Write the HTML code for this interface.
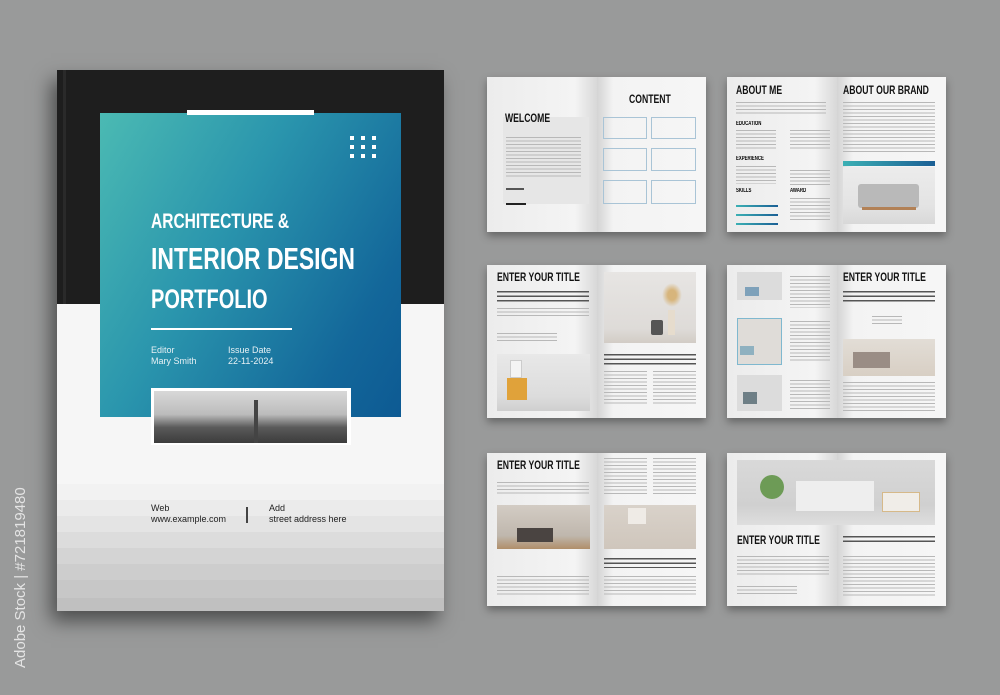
<!DOCTYPE html>
<html><head><meta charset="utf-8"><style>
*{margin:0;padding:0;box-sizing:border-box}
body{width:1000px;height:695px;background:#999a9a;position:relative;overflow:hidden;font-family:"Liberation Sans",sans-serif}
.a{position:absolute}
.cond{font-weight:bold;transform:scaleX(0.72);transform-origin:0 0;white-space:nowrap}
.sp{position:absolute;background:#f2f2f2;box-shadow:0 4px 8px rgba(0,0,0,.35)}
.pg{position:absolute;top:0;bottom:0;width:50%}
.pl{left:0;background:linear-gradient(90deg,#ececec,#f4f4f4 80%,#d8d8d8)}
.pr{right:0;background:linear-gradient(90deg,#d4d4d4,#f3f3f3 15%,#f6f6f6)}
.tx{position:absolute;background:repeating-linear-gradient(#b8b8b8 0 1px,transparent 1px 3.5px)}
.tb{position:absolute;background:repeating-linear-gradient(#555 0 1.5px,transparent 1.5px 4.5px)}
.h{position:absolute;color:#111;font-size:12px;white-space:nowrap}
</style></head><body>

<!-- cover -->
<div class="a" style="left:57px;top:70px;width:387px;height:541px;box-shadow:-6px 10px 18px rgba(0,0,0,.5);background:#fff"></div>
<div class="a" style="left:57px;top:70px;width:387px;height:234px;background:#1e1e1e"></div>
<div class="a" style="left:63px;top:70px;width:3px;height:234px;background:#2a2a2a"></div>
<div class="a" style="left:57px;top:304px;width:387px;height:180px;background:#f6f6f6"></div>
<div class="a" style="left:57px;top:484px;width:387px;height:16px;background:#f2f2f2"></div>
<div class="a" style="left:57px;top:500px;width:387px;height:16px;background:#ebebeb"></div>
<div class="a" style="left:57px;top:516px;width:387px;height:16px;background:#e4e4e4"></div>
<div class="a" style="left:57px;top:532px;width:387px;height:16px;background:#dcdcdc"></div>
<div class="a" style="left:57px;top:548px;width:387px;height:16px;background:#d4d4d4"></div>
<div class="a" style="left:57px;top:564px;width:387px;height:16px;background:#cdcdcd"></div>
<div class="a" style="left:57px;top:580px;width:387px;height:18px;background:#c7c7c7"></div>
<div class="a" style="left:57px;top:598px;width:387px;height:13px;background:#c0c0c0"></div>
<div class="a" style="left:100px;top:113px;width:301px;height:304px;background:linear-gradient(120deg,#4bbab3 0%,#2a95ad 40%,#13679a 80%,#0d5a93 100%)"></div>
<div class="a" style="left:187px;top:110px;width:127px;height:5px;background:#fff"></div>
<svg class="a" style="left:348px;top:134px" width="30" height="26"><g fill="#fff">
<rect x="2" y="2" width="4" height="4"/><rect x="13" y="2" width="4" height="4"/><rect x="24" y="2" width="4" height="4"/>
<rect x="2" y="11" width="4" height="4"/><rect x="13" y="11" width="4" height="4"/><rect x="24" y="11" width="4" height="4"/>
<rect x="2" y="20" width="4" height="4"/><rect x="13" y="20" width="4" height="4"/><rect x="24" y="20" width="4" height="4"/></g></svg>
<div class="a cond" style="left:151px;top:209px;color:#fff;font-size:21px;line-height:26px;transform:scaleX(0.74)">ARCHITECTURE &amp;</div>
<div class="a cond" style="left:151px;top:242px;color:#fff;font-size:31px;line-height:34px;transform:scaleX(0.74)">INTERIOR DESIGN</div>
<div class="a cond" style="left:151px;top:283px;color:#fff;font-size:27px;line-height:32px;transform:scaleX(0.74)">PORTFOLIO</div>
<div class="a" style="left:151px;top:328px;width:141px;height:2px;background:#fff"></div>
<div class="a" style="left:151px;top:345px;color:#e6f0f4;font-size:9px;line-height:11px">Editor<br>Mary Smith</div>
<div class="a" style="left:228px;top:345px;color:#e6f0f4;font-size:9px;line-height:11px">Issue Date<br>22-11-2024</div>
<div class="a" style="left:151px;top:388px;width:200px;height:57px;background:#fff"></div>
<div class="a" style="left:154px;top:391px;width:193px;height:52px;background:linear-gradient(#d8d8d8,#bcbcbc 45%,#5a5a5a 70%,#3c3c3c)"></div>
<div class="a" style="left:254px;top:400px;width:4px;height:43px;background:#444"></div>
<div class="a" style="left:151px;top:503px;color:#222;font-size:9px;line-height:11px">Web<br>www.example.com</div>
<div class="a" style="left:246px;top:507px;width:1.5px;height:16px;background:#444"></div>
<div class="a" style="left:269px;top:503px;color:#222;font-size:9px;line-height:11px">Add<br>street address here</div>

<!-- watermark id -->
<div class="a" style="left:12px;top:668px;transform:rotate(-90deg);transform-origin:0 0;color:#e4e4e4;font-size:15px;white-space:nowrap">Adobe Stock | #721819480</div>

<!-- S1 -->
<div class="sp" style="left:487px;top:77px;width:219px;height:155px"><div class="pg pl"></div><div class="pg pr"></div></div>
<div class="a" style="left:503px;top:117px;width:86px;height:87px;background:#e6e6e6"></div>
<div class="h cond" style="left:505px;top:111px">WELCOME</div>
<div class="tx" style="left:506px;top:137px;width:75px;height:40px"></div>
<div class="a" style="left:506px;top:188px;width:18px;height:2px;background:#555"></div>
<div class="a" style="left:506px;top:203px;width:20px;height:2px;background:#222"></div>
<div class="h cond" style="left:629px;top:92px">CONTENT</div>
<div class="a" style="left:603px;top:117px;width:44px;height:22px;border:1px solid #a9c4d6"></div>
<div class="a" style="left:651px;top:117px;width:45px;height:22px;border:1px solid #a9c4d6"></div>
<div class="a" style="left:603px;top:148px;width:44px;height:23px;border:1px solid #a9c4d6"></div>
<div class="a" style="left:651px;top:148px;width:45px;height:23px;border:1px solid #a9c4d6"></div>
<div class="a" style="left:603px;top:180px;width:44px;height:24px;border:1px solid #a9c4d6"></div>
<div class="a" style="left:651px;top:180px;width:45px;height:24px;border:1px solid #a9c4d6"></div>

<!-- S2 -->
<div class="sp" style="left:727px;top:77px;width:219px;height:155px"><div class="pg pl"></div><div class="pg pr"></div></div>
<div class="h cond" style="left:736px;top:83px">ABOUT ME</div>
<div class="tx" style="left:736px;top:102px;width:90px;height:12px"></div>
<div class="a cond" style="left:736px;top:121px;font-size:6px">EDUCATION</div>
<div class="tx" style="left:736px;top:130px;width:40px;height:20px"></div>
<div class="tx" style="left:790px;top:130px;width:40px;height:20px"></div>
<div class="a cond" style="left:736px;top:156px;font-size:6px">EXPERIENCE</div>
<div class="tx" style="left:736px;top:166px;width:40px;height:18px"></div>
<div class="tx" style="left:790px;top:170px;width:40px;height:16px"></div>
<div class="a cond" style="left:736px;top:188px;font-size:6px">SKILLS</div>
<div class="a cond" style="left:790px;top:188px;font-size:6px">AWARD</div>
<div class="a" style="left:736px;top:205px;width:42px;height:2px;background:linear-gradient(90deg,#3bb0b4,#1b5f95)"></div>
<div class="a" style="left:736px;top:214px;width:42px;height:2px;background:linear-gradient(90deg,#3bb0b4,#1b5f95)"></div>
<div class="a" style="left:736px;top:223px;width:42px;height:2px;background:linear-gradient(90deg,#3bb0b4,#1b5f95)"></div>
<div class="tx" style="left:790px;top:198px;width:40px;height:24px"></div>
<div class="h cond" style="left:843px;top:83px">ABOUT OUR BRAND</div>
<div class="tx" style="left:843px;top:102px;width:92px;height:50px"></div>
<div class="a" style="left:843px;top:161px;width:92px;height:5px;background:linear-gradient(90deg,#3bb0b4,#1b5f95)"></div>
<div class="a" style="left:843px;top:167px;width:92px;height:57px;background:linear-gradient(#ececec,#e3e3e3 70%,#d8d8d8)"></div>
<div class="a" style="left:858px;top:184px;width:61px;height:24px;background:#b9b9b9;border-radius:3px"></div>
<div class="a" style="left:862px;top:207px;width:54px;height:3px;background:#b28156"></div>

<!-- S3 -->
<div class="sp" style="left:487px;top:265px;width:219px;height:153px"><div class="pg pl"></div><div class="pg pr"></div></div>
<div class="h cond" style="left:497px;top:270px">ENTER YOUR TITLE</div>
<div class="tb" style="left:497px;top:291px;width:92px;height:13px"></div>
<div class="tx" style="left:497px;top:308px;width:92px;height:10px"></div>
<div class="tx" style="left:497px;top:333px;width:60px;height:10px"></div>
<div class="a" style="left:497px;top:354px;width:93px;height:57px;background:linear-gradient(#e8e8e8,#dcdcdc 75%,#cfcfcf)"></div>
<div class="a" style="left:507px;top:378px;width:20px;height:22px;background:#e0a23a"></div>
<div class="a" style="left:510px;top:360px;width:12px;height:18px;background:#f4f4f4;border:1px solid #ccc"></div>
<div class="a" style="left:604px;top:272px;width:92px;height:71px;background:linear-gradient(#e7e5e3,#dedbd8 80%,#d2ccc5)"></div>
<div class="a" style="left:651px;top:320px;width:12px;height:15px;background:#555;border-radius:2px"></div>
<div class="a" style="left:668px;top:310px;width:7px;height:25px;background:#e6dccd"></div>
<div class="a" style="left:662px;top:283px;width:20px;height:24px;background:radial-gradient(#d7b57c 30%,transparent 70%)"></div>
<div class="tb" style="left:604px;top:354px;width:92px;height:13px"></div>
<div class="tx" style="left:604px;top:371px;width:43px;height:35px"></div>
<div class="tx" style="left:653px;top:371px;width:43px;height:35px"></div>

<!-- S4 -->
<div class="sp" style="left:727px;top:265px;width:219px;height:153px"><div class="pg pl"></div><div class="pg pr"></div></div>
<div class="a" style="left:737px;top:272px;width:45px;height:28px;background:#dcdcdc"></div>
<div class="a" style="left:745px;top:287px;width:14px;height:9px;background:#7ea1ba"></div>
<div class="a" style="left:737px;top:318px;width:45px;height:47px;background:#dfdcd8;border:1px solid #7fb8cf"></div>
<div class="a" style="left:740px;top:346px;width:14px;height:9px;background:#8fb1c0"></div>
<div class="a" style="left:737px;top:375px;width:45px;height:36px;background:#dcdcdc"></div>
<div class="a" style="left:743px;top:392px;width:14px;height:12px;background:#6e7f86"></div>
<div class="tx" style="left:790px;top:276px;width:40px;height:32px"></div>
<div class="tx" style="left:790px;top:321px;width:40px;height:40px"></div>
<div class="tx" style="left:790px;top:380px;width:40px;height:30px"></div>
<div class="h cond" style="left:843px;top:270px">ENTER YOUR TITLE</div>
<div class="tb" style="left:843px;top:291px;width:92px;height:13px"></div>
<div class="tx" style="left:872px;top:316px;width:30px;height:10px"></div>
<div class="a" style="left:843px;top:339px;width:92px;height:37px;background:linear-gradient(#e2ddd6,#d8cfc4)"></div>
<div class="a" style="left:853px;top:352px;width:37px;height:16px;background:#9a8d85"></div>
<div class="tx" style="left:843px;top:382px;width:92px;height:30px"></div>

<!-- S5 -->
<div class="sp" style="left:487px;top:453px;width:219px;height:153px"><div class="pg pl"></div><div class="pg pr"></div></div>
<div class="h cond" style="left:497px;top:458px">ENTER YOUR TITLE</div>
<div class="tx" style="left:497px;top:482px;width:92px;height:12px"></div>
<div class="a" style="left:497px;top:505px;width:93px;height:44px;background:linear-gradient(#d3ccc4,#bfb7ad 70%,#b08e6a)"></div>
<div class="a" style="left:517px;top:528px;width:36px;height:14px;background:#4a4441"></div>
<div class="a" style="left:604px;top:505px;width:92px;height:44px;background:linear-gradient(#d9d2ca,#cfc6bc)"></div>
<div class="a" style="left:628px;top:508px;width:18px;height:16px;background:#efebe6"></div>
<div class="tx" style="left:604px;top:458px;width:43px;height:36px"></div>
<div class="tx" style="left:653px;top:458px;width:43px;height:36px"></div>
<div class="tb" style="left:604px;top:558px;width:92px;height:10px"></div>
<div class="tx" style="left:604px;top:576px;width:92px;height:20px"></div>
<div class="tx" style="left:497px;top:576px;width:92px;height:20px"></div>

<!-- S6 -->
<div class="sp" style="left:727px;top:453px;width:219px;height:153px"><div class="pg pl"></div><div class="pg pr"></div></div>
<div class="a" style="left:737px;top:460px;width:198px;height:65px;background:linear-gradient(#d9d9d9,#d0d0d0 70%,#dedede)"></div>
<div class="a" style="left:796px;top:481px;width:78px;height:30px;background:#eeeeee"></div>
<div class="a" style="left:882px;top:492px;width:38px;height:20px;background:#f0ede8;border:1px solid #d6b989"></div>
<div class="a" style="left:760px;top:475px;width:24px;height:24px;border-radius:50%;background:#6d9b56"></div>
<div class="h cond" style="left:737px;top:533px">ENTER YOUR TITLE</div>
<div class="tb" style="left:843px;top:536px;width:92px;height:9px"></div>
<div class="tx" style="left:737px;top:556px;width:92px;height:20px"></div>
<div class="tx" style="left:843px;top:556px;width:92px;height:40px"></div>
<div class="tx" style="left:737px;top:586px;width:60px;height:10px"></div>
</body></html>
